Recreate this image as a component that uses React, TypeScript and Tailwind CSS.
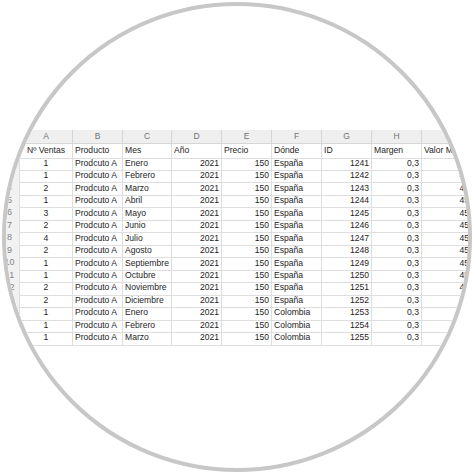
import React from 'react';

const letters = ['A', 'B', 'C', 'D', 'E', 'F', 'G', 'H', 'I'];
const titles = ['Producto', 'Mes', 'Año', 'Precio', 'Dónde', 'ID', 'Margen', 'Valor Medio'];

const qty = [1, 1, 2, 1, 3, 2, 4, 2, 1, 1, 2, 2, 1, 1, 1];
const months = [
  'Enero', 'Febrero', 'Marzo', 'Abril', 'Mayo', 'Junio', 'Julio', 'Agosto',
  'Septiembre', 'Octubre', 'Noviembre', 'Diciembre', 'Enero', 'Febrero', 'Marzo',
];

const rows = qty.map((q, i) => ({
  q,
  mes: months[i],
  donde: i < 12 ? 'España' : 'Colombia',
  id: 1241 + i,
}));

const cols = 'grid grid-cols-[20px_53px_50px_49px_50px_50px_50px_50px_50px_50px]';
const cell = 'border-r border-b border-[#dedede] px-[2px] overflow-hidden whitespace-nowrap flex items-center';
const rowHead = 'border-r border-b border-[#dedede] flex items-center justify-center bg-[#f1f1f1] text-[#858585] text-[9px]';

export default function App() {
  return (
    <div className="relative w-[474px] h-[474px] bg-white" style={{ fontFamily: '"Liberation Sans", Arial, sans-serif' }}>
      <div className="absolute left-[2px] top-[2px] w-[470px] h-[470px] rounded-full border-4 border-[#c7c7c7] overflow-hidden bg-white">
        <div className="ml-[-6px] mt-[124px] w-[472px] text-[8.6px] text-[#1e1e1e]">
          {/* column letters */}
          <div className={`${cols} h-[14px] bg-[#efefef] text-[#727272] text-[8.5px]`}>
            <div className="border-r border-b border-[#d6d6d6]" />
            {letters.map((l) => (
              <div key={l} className="border-r border-b border-[#d6d6d6] flex items-center justify-center">
                {l}
              </div>
            ))}
          </div>

          {/* title row */}
          <div className={`${cols} h-[12.47px]`}>
            <div className={rowHead}>1</div>
            <div className={`${cell} justify-center`}>Nº Ventas</div>
            {titles.map((t) => (
              <div key={t} className={cell}>{t}</div>
            ))}
          </div>

          {rows.map((r, i) => (
            <div key={i} className={`${cols} h-[12.47px]`}>
              <div className={rowHead}>{i + 2}</div>
              <div className={`${cell} justify-center`}>{r.q}</div>
              <div className={cell}>Prodcuto A</div>
              <div className={cell}>{r.mes}</div>
              <div className={`${cell} justify-end`}>2021</div>
              <div className={`${cell} justify-end`}>150</div>
              <div className={cell}>{r.donde}</div>
              <div className={`${cell} justify-end`}>{r.id}</div>
              <div className={`${cell} justify-end`}>0,3</div>
              <div className={`${cell} justify-end`}>45</div>
            </div>
          ))}
        </div>
      </div>
    </div>
  );
}
